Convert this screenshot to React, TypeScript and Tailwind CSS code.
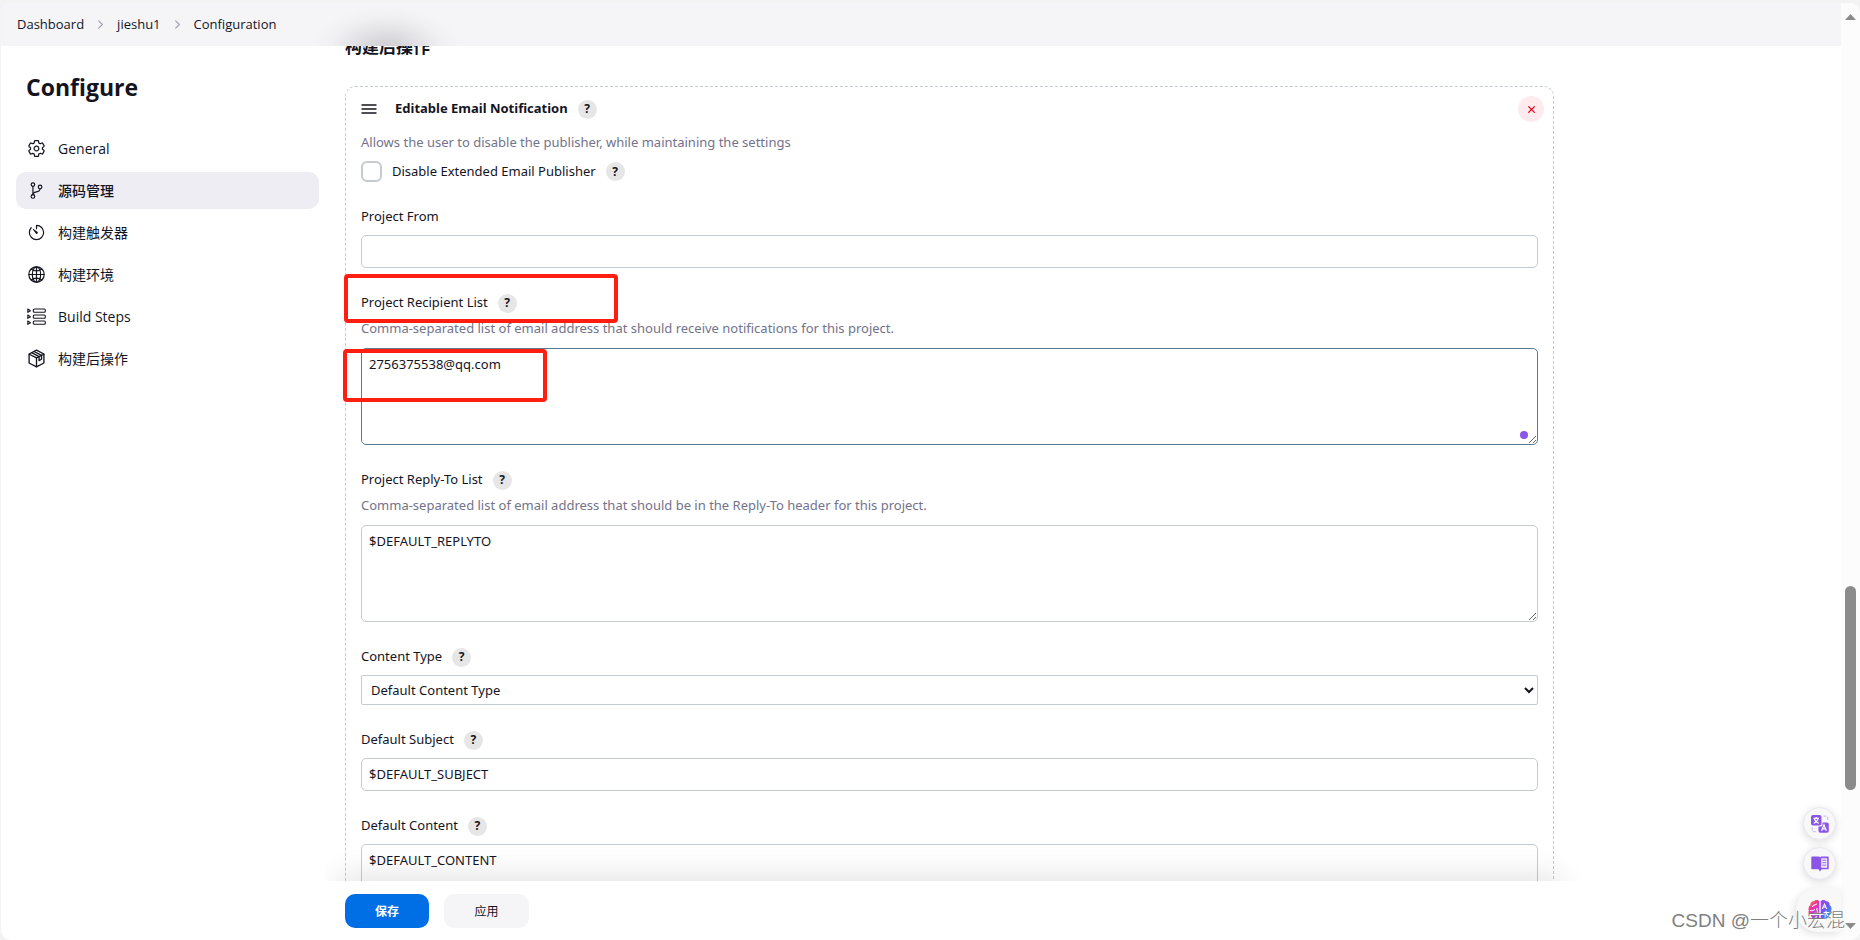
import { useState } from "react";
import type { ReactNode } from "react";
import { IoChevronForward, IoClose, IoGitBranchOutline, IoGlobeOutline, IoSettingsOutline, IoTimerOutline } from "react-icons/io5";

const inputC = "block w-full rounded-[5px] border border-[#c3ccd1] bg-white px-[7px] pb-[2px] text-[13px] text-[#14141f] outline-none";
const areaC = "block h-[97px] w-full rounded-[5px] border bg-white px-[7px] py-[5px] text-[13px] leading-5 text-[#14141f] outline-none";
const pageFont = "font-['Open_Sans','Noto_Sans_CJK_SC',sans-serif]";
const formFont = "font-['Noto_Sans','Noto_Sans_CJK_SC',sans-serif]";

function BuildStepsIcon() {
  return (
    <svg viewBox="0 0 19 18" className="h-[18px] w-[19px]" fill="none" stroke="currentColor" strokeWidth="1.1" strokeLinejoin="round">
      {[1, 7, 13].map((y) => (
        <g key={y}>
          <path d={`M.8 ${y}v3.4l2.6-1.7z`} />
          <rect x="6.3" y={y} width="12" height="3.2" rx="1" />
        </g>
      ))}
    </svg>
  );
}

function PackageIcon() {
  return (
    <svg viewBox="0 0 20 20" className="h-[19px] w-[19px]" fill="none" stroke="currentColor" strokeWidth="1.4" strokeLinejoin="round" strokeLinecap="round">
      <path d="M10 1.2 17.8 5.3v9.4L10 18.8l-7.8-4.1V5.3z" />
      <path d="M2.4 5.5 10 9.4l7.6-3.9M10 9.4v9.2" />
      <path d="M5 3.9l7.7 4.1v4.2l2.6-1.4V6.7L7.5 2.6" />
    </svg>
  );
}

function TranslateIcon() {
  return (
    <svg viewBox="0 0 18 18" className="h-[18px] w-[18px]" fill="none">
      <rect x="0" y="0" width="10.5" height="10.5" rx="2" fill="#8b55e8" />
      <path d="M2.5 3.4h5.5M5.2 2v1.4M7 3.6C6.5 5.8 4.8 7.5 2.7 8.2M3.5 3.8c.5 2 2.2 3.8 4.4 4.4" stroke="#fff" strokeWidth="1.1" />
      <path d="M11.5 7.5H16a1.8 1.8 0 0 1 1.8 1.8V16a1.8 1.8 0 0 1-1.8 1.8H9.3A1.8 1.8 0 0 1 7.5 16v-4.5h2.3a1.7 1.7 0 0 0 1.7-1.7z" fill="#8b55e8" />
      <path d="m10.5 15.8 2.5-6 2.4 6M11.3 13.9h3.4" stroke="#fff" strokeWidth="1.2" />
      <path d="M12.5 1.2h2.7a1.5 1.5 0 0 1 1.5 1.5v2.5M1.3 12.5v2.7a1.5 1.5 0 0 0 1.5 1.5h2.5" stroke="#d3c0f5" strokeWidth="1.3" strokeDasharray="3 1" />
    </svg>
  );
}

function BookIcon() {
  return (
    <svg viewBox="0 0 18 16" className="h-4 w-[18px]" fill="none">
      <path d="M.3 1.5C.3.9.8.5 1.4.5H7c1 0 1.7.4 2 1 .3-.6 1-1 2-1h5.6c.6 0 1.1.4 1.1 1v10.7c0 .6-.5 1-1.1 1h-6L9 15.5l-1.5-2.3H1.4c-.6 0-1.1-.4-1.1-1z" fill="#8b55e8" />
      <path d="M10.3 2.2h5.9v9.5h-6z" fill="#f3ecff" />
      <path d="M11.3 4.2h4M11.3 6.7h4M11.3 9.2h4" stroke="#8b55e8" strokeWidth=".9" />
    </svg>
  );
}

function BrainIcon() {
  return (
    <svg viewBox="0 0 24 22" className="h-[22px] w-6" fill="none">
      <defs>
        <linearGradient id="lobeL" x1="0" y1="0" x2=".6" y2="1">
          <stop offset="0" stopColor="#f7931e" />
          <stop offset=".45" stopColor="#ee2fa8" />
          <stop offset="1" stopColor="#9b4df5" />
        </linearGradient>
        <linearGradient id="lobeR" x1="0" y1="0" x2=".8" y2="1">
          <stop offset="0" stopColor="#b03df0" />
          <stop offset=".5" stopColor="#6a5af5" />
          <stop offset="1" stopColor="#22a7f7" />
        </linearGradient>
      </defs>
      <path d="M11.3 2.5C10.5.8 7.4.3 6 2.3 3.5 2 2 4 2.5 6 .6 7.2 0 9.5.8 11.3c-.8 2.2.2 4.4 2.2 5.2.3 2.3 2.4 3.6 4.4 3.1 1.3 1.6 3.3 1.3 3.9 0z" fill="url(#lobeL)" />
      <path d="M12.7 2.5c.8-1.7 3.9-2.2 5.3-.2 2.5-.3 4 1.7 3.5 3.7 1.9 1.2 2.5 3.5 1.7 5.3.8 2.2-.2 4.4-2.2 5.2-.3 2.3-2.4 3.6-4.4 3.1-1.3 1.6-3.3 1.3-3.9 0z" fill="url(#lobeR)" />
      <path d="M4.5 7.5C6 5.5 8 6 8.5 5M2.5 11.5c2 .8 3-.5 4-.8M5 16c.5-2 2.5-2 3.5-1.5M9 9.5c-.5 1 .5 2 0 3M14.5 9.5l2-4.5 2 4.5M15.3 8h2.4M16 13.5h4.5M18 12v2l2 3" stroke="#fff" strokeWidth="1.1" strokeLinecap="round" />
    </svg>
  );
}

function Help({ topic }: { topic: string }) {
  return (
    <button type="button" aria-label={`Help for feature: ${topic}`} className="flex h-[19px] w-[19px] shrink-0 items-center justify-center rounded-full bg-[#e6e6e6] text-xs font-bold leading-none text-[#14141f]">
      ?
    </button>
  );
}

function Field({ id, label, help, description, marked, children }: { id: string; label: string; help?: boolean; description?: string; marked?: boolean; children: ReactNode }) {
  return (
    <div className="mt-[25px]">
      <div className="relative flex h-5 items-center gap-[10px]">
        <label htmlFor={id}>{label}</label>
        {help && <Help topic={label} />}
        {marked && <span className="pointer-events-none absolute -left-[17px] -top-[19px] z-10 h-[49px] w-[274px] rounded-[4px] border-4 border-[#ff1e10]" />}
      </div>
      {description ? <p className="mb-[10px] mt-[5px] leading-5 text-[#73738c]">{description}</p> : <div className="h-2" />}
      {children}
    </div>
  );
}

const tasks: { label: string; icon: ReactNode }[] = [
  { label: "General", icon: <IoSettingsOutline size={19} /> },
  { label: "源码管理", icon: <IoGitBranchOutline size={19} /> },
  { label: "构建触发器", icon: <IoTimerOutline size={19} /> },
  { label: "构建环境", icon: <IoGlobeOutline size={19} /> },
  { label: "Build Steps", icon: <BuildStepsIcon /> },
  { label: "构建后操作", icon: <PackageIcon /> },
];

const crumbs = ["Dashboard", "jieshu1", "Configuration"];

export default function App() {
  const [active, setActive] = useState("源码管理");
  const [disabled, setDisabled] = useState(false);
  const [recipients, setRecipients] = useState("2756375538@qq.com");

  return (
    <div className={`h-screen overflow-hidden bg-[#f3f3f3] pt-[3px] text-[13px] text-[#14141f] ${pageFont}`}>
      <div className="relative flex h-full overflow-hidden rounded-[10px] border-l border-[#f3f3f3] bg-white">
        <div className="flex min-w-0 flex-1 flex-col">
          <header className="relative z-10 h-[43px] shrink-0 overflow-hidden bg-[#f5f5f8]">
            {/* blurred heading showing through the bar */}
            <div className="absolute left-[311px] top-[3px] h-[86px] w-[150px] bg-[radial-gradient(closest-side,rgba(20,20,31,0.18),rgba(20,20,31,0.08)_45%,rgba(20,20,31,0.02)_75%,transparent)]" />
            <nav className="relative flex h-full items-center gap-[10px] pl-4">
              {crumbs.map((c, i) => (
                <div key={c} className="flex items-center gap-[10px]">
                  {i > 0 && <IoChevronForward size={13} className="text-[#a3a3b5]" />}
                  <a href="#">{c}</a>
                </div>
              ))}
            </nav>
          </header>

          <div className="flex min-h-0 flex-1">
            <aside className="w-[324px] shrink-0 pl-[15px] pr-[6px] pt-[23px]">
              <h1 className="pl-[10px] text-[23px] font-bold leading-9">Configure</h1>
              <nav className="mt-[25px] flex flex-col gap-[5px]">
                {tasks.map((t) => (
                  <button
                    key={t.label}
                    type="button"
                    onClick={() => setActive(t.label)}
                    className={`flex h-[37px] items-center gap-3 rounded-[10px] pl-[11px] text-sm ${active === t.label ? "bg-[#ededf3] font-medium" : ""}`}
                  >
                    {t.icon}
                    {t.label}
                  </button>
                ))}
              </nav>
            </aside>

            <main className={`flex min-w-0 flex-1 flex-col ${formFont}`}>
              <div className="min-h-0 flex-1 overflow-hidden pl-5 pr-5">
                <h2 className="-mt-[11px] text-[17px] font-bold leading-6">构建后操作</h2>
                <section className="mt-[27px] max-w-[1209px] rounded-[10px] border border-dashed border-[#c3ccd1] pb-4 pl-[15px] pr-[15px] pt-[9px]">
                  <div className="-mr-[6px] flex h-[26px] items-center">
                    <svg viewBox="0 0 16 10" className="h-[10px] w-4" stroke="#14141f" strokeWidth="1.4" strokeLinecap="round">
                      <path d="M1 1h14M1 5h14M1 9h14" />
                    </svg>
                    <span className="ml-[18px] mr-[10px] font-bold">Editable Email Notification</span>
                    <Help topic="Editable Email Notification" />
                    <button type="button" aria-label="Delete" className="ml-auto flex h-[26px] w-[26px] items-center justify-center rounded-full bg-[#fdebed] text-[#e6001f]">
                      <IoClose size={13} />
                    </button>
                  </div>

                  <p className="mt-[10px] leading-5 text-[#73738c]">Allows the user to disable the publisher, while maintaining the settings</p>
                  <div className="mt-[9px] flex h-[21px] items-center gap-[10px]">
                    <input
                      id="disable"
                      type="checkbox"
                      checked={disabled}
                      onChange={(e) => setDisabled(e.target.checked)}
                      className="h-[21px] w-[21px] appearance-none rounded-[6px] border-2 border-[#c3ccd1] bg-white checked:bg-[#006ce5]"
                    />
                    <label htmlFor="disable">Disable Extended Email Publisher</label>
                    <Help topic="Disable Extended Email Publisher" />
                  </div>

                  <Field id="from" label="Project From">
                    <input id="from" type="text" className={`${inputC} h-[33px]`} />
                  </Field>

                  <Field id="recipients" label="Project Recipient List" help marked description="Comma-separated list of email address that should receive notifications for this project.">
                    <div className="relative">
                      <textarea id="recipients" value={recipients} onChange={(e) => setRecipients(e.target.value)} className={`${areaC} border-[#5b7a8f]`} />
                      <span className="pointer-events-none absolute bottom-[6px] right-[10px] h-2 w-2 rounded-full bg-[#8b55e8]" />
                      <span className="pointer-events-none absolute -left-[18px] top-px h-[53px] w-[204px] rounded-[4px] border-4 border-[#ff1e10]" />
                    </div>
                  </Field>

                  <Field id="replyTo" label="Project Reply-To List" help description="Comma-separated list of email address that should be in the Reply-To header for this project.">
                    <textarea id="replyTo" defaultValue="$DEFAULT_REPLYTO" className={`${areaC} border-[#c3ccd1]`} />
                  </Field>

                  <Field id="contentType" label="Content Type" help>
                    <select id="contentType" className="block h-[30px] w-full rounded-[2px] border border-[#c3ccd1] bg-white px-[5px] text-[13px] outline-none">
                      <option>Default Content Type</option>
                      <option>HTML (text/html)</option>
                      <option>Plain Text (text/plain)</option>
                    </select>
                  </Field>

                  <Field id="subject" label="Default Subject" help>
                    <input id="subject" type="text" defaultValue="$DEFAULT_SUBJECT" className={`${inputC} h-[33px]`} />
                  </Field>

                  <Field id="content" label="Default Content" help>
                    <textarea id="content" defaultValue="$DEFAULT_CONTENT" className={`${areaC} border-[#c3ccd1]`} />
                  </Field>
                </section>
              </div>

              <footer className="relative shrink-0 bg-white pb-3 pl-5 pr-5 pt-[13px]">
                <div className="pointer-events-none absolute bottom-full left-0 h-10 w-full overflow-hidden pl-5 pr-5">
                  <div className="mt-10 h-14 max-w-[1209px] shadow-[0_0_30px_6px_rgba(0,0,0,0.11)]" />
                </div>
                <div className="flex gap-[15px] text-xs">
                  <button type="button" className="h-[34px] w-[84px] rounded-[10px] bg-[#006fe6] pt-[2px] font-bold text-white">保存</button>
                  <button type="button" className="h-[34px] w-[85px] rounded-[10px] bg-[#f5f5f8] pt-[2px]">应用</button>
                </div>
              </footer>
            </main>
          </div>
        </div>

        {/* scroll track */}
        <div className="flex w-[19px] shrink-0 flex-col items-center bg-[#fcfcfc] pb-[11px] pt-[11px]">
          <svg viewBox="0 0 11 6" className="h-[6px] w-[11px]" fill="#8b8b8b"><path d="M5.5 0 11 6H0z" /></svg>
          <div className="flex-[566]" />
          <div className="w-[11px] flex-[204] rounded-full bg-[#8b8b8b]" />
          <div className="flex-[133]" />
          <svg viewBox="0 0 11 6" className="h-[6px] w-[11px]" fill="#8b8b8b"><path d="M0 0h11L5.5 6z" /></svg>
        </div>

        {/* browser assistant buttons */}
        <div className="absolute bottom-2 right-[19px] z-20 flex flex-col items-end">
          <button type="button" aria-label="Translate" className="mr-[5px] flex h-[33px] w-[33px] items-center justify-center rounded-full border border-[#e9e6f2] bg-[#f8f8f8] shadow-[0_2px_8px_rgba(0,0,0,0.14)]">
            <TranslateIcon />
          </button>
          <button type="button" aria-label="Read" className="mr-[5px] mt-[7px] flex h-[33px] w-[33px] items-center justify-center rounded-full border border-[#e9e6f2] bg-[#f8f8f8] shadow-[0_2px_8px_rgba(0,0,0,0.14)]">
            <BookIcon />
          </button>
          <button type="button" aria-label="Assistant" className="mt-2 flex h-11 w-[45px] items-center rounded-l-full bg-[#f8f8f8] pl-3 shadow-[-2px_2px_8px_rgba(0,0,0,0.12)]">
            <BrainIcon />
          </button>
        </div>

        <div className="pointer-events-none absolute bottom-[5px] right-[15px] z-30 whitespace-nowrap font-['Liberation_Sans','Noto_Sans_CJK_SC',sans-serif] text-[19px] font-light text-[#808080] [text-shadow:1px_1px_0_#fff]">
          CSDN @一个小宏混
        </div>
      </div>
    </div>
  );
}
